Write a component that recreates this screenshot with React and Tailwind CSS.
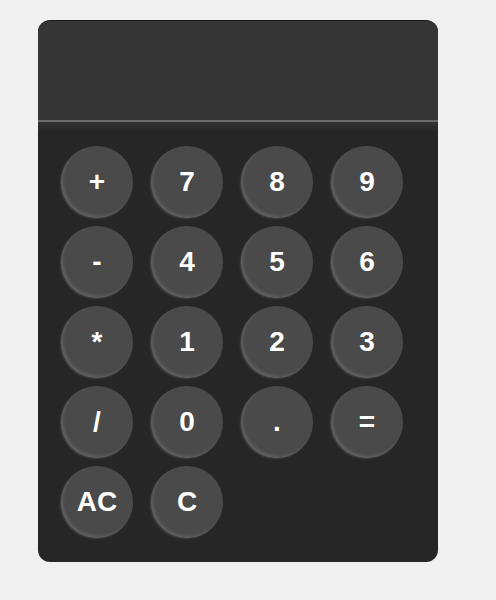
import React, { useState } from "react";

const KEYS = ["+", "7", "8", "9", "-", "4", "5", "6", "*", "1", "2", "3", "/", "0", ".", "=", "AC", "C"];

const App = () => {
  const [value, setValue] = useState("");

  const press = (k) => {
    if (k === "AC") return setValue("");
    if (k === "C") return setValue((v) => v.slice(0, -1));
    if (k === "=") {
      try {
        // eslint-disable-next-line no-new-func
        setValue(String(Function(`return (${value})`)()));
      } catch (e) {
        setValue("Error");
      }
      return;
    }
    setValue((v) => v + k);
  };

  return (
    <div className="min-h-[600px] bg-[#f0f0f0] pt-5 pl-[38px]" style={{ fontFamily: '"Liberation Sans", Arial, sans-serif' }}>
      <div className="w-[400px] h-[542px] rounded-xl bg-[#262626] overflow-hidden flex flex-col border-t border-[#1c1c1c]">
        {/* Display */}
        <div className="h-[99px] bg-[#353535] flex items-end justify-end px-5 pb-3 text-white text-4xl">
          {value}
        </div>
        <div className="h-[2px] bg-[#6a6a6a]" />
        <div className="h-[10px] bg-gradient-to-b from-[#343434] to-[#262626]" />

        {/* Keys */}
        <div className="grid grid-cols-[repeat(4,72px)] gap-x-[18px] gap-y-2 pl-[23px] pt-[14px]">
          {KEYS.map((k) => (
            <button
              key={k}
              onClick={() => press(k)}
              className="w-[72px] h-[72px] rounded-full bg-[#4a4a4a] text-white text-[28px] font-bold flex items-center justify-center shadow-[inset_2px_-2px_3px_rgba(110,110,110,0.6),-1px_1px_2px_rgba(90,90,90,0.6)]"
            >
              {k}
            </button>
          ))}
        </div>
      </div>
    </div>
  );
};

export default App;
